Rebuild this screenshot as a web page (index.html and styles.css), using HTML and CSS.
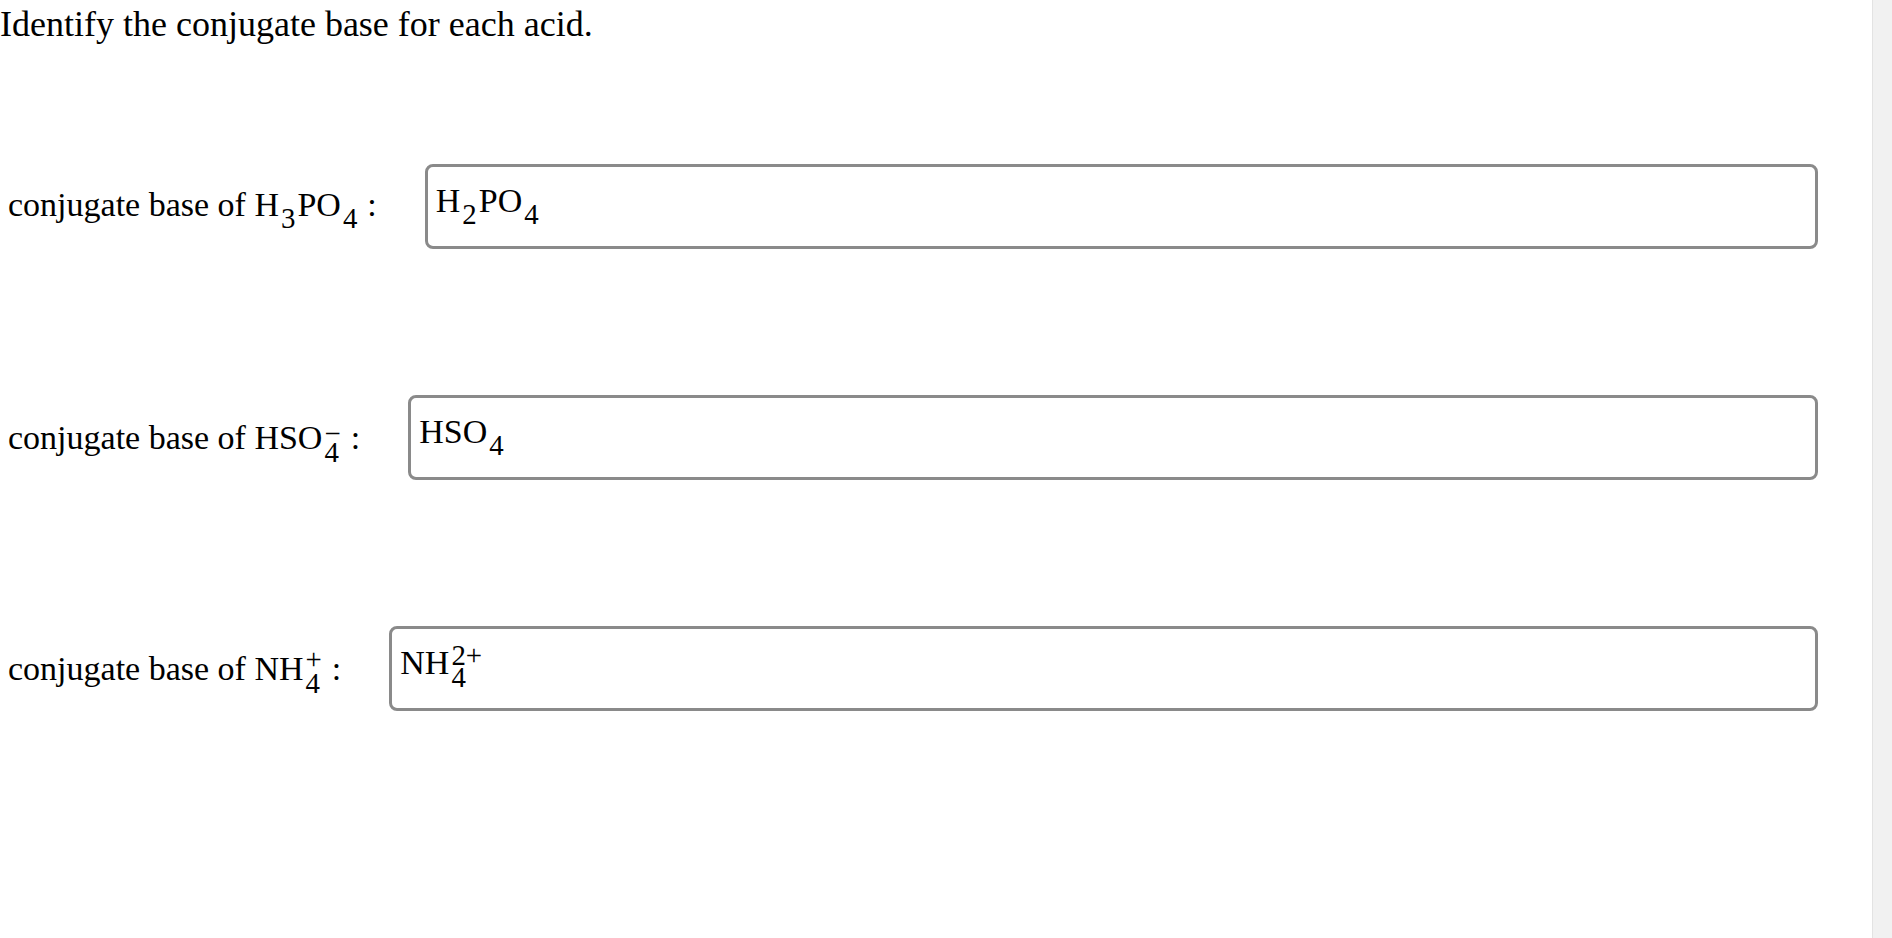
FILE: index.html
```html
<!DOCTYPE html>
<html>
<head>
<meta charset="utf-8">
<link rel="stylesheet" href="styles.css">
</head>
<body>
<div class="page">
  <main class="content">
    <div class="title">Identify the conjugate base for each acid.</div>
    <div class="rows">
      <div class="row">
        <div class="label">conjugate base of H<span class="sub">3</span>PO<span class="sub">4</span><span class="colon">:</span></div>
        <div class="box"><span class="value">H<span class="sub">2</span>PO<span class="sub">4</span></span></div>
      </div>
      <div class="row">
        <div class="label">conjugate base of HSO<span class="ss"><span class="sup minus">&minus;</span><span class="sb">4</span></span><span class="colon">:</span></div>
        <div class="box"><span class="value">HSO<span class="sub">4</span></span></div>
      </div>
      <div class="row">
        <div class="label">conjugate base of NH<span class="ss"><span class="sup">+</span><span class="sb">4</span></span><span class="colon">:</span></div>
        <div class="box"><span class="value">NH<span class="ss tight"><span class="sup">2+</span><span class="sb">4</span></span></span></div>
      </div>
    </div>
  </main>
  <div class="scrollbar"></div>
</div>
</body>
</html>
```
FILE: styles.css
```css
html, body {
  margin: 0;
  padding: 0;
  height: 100%;
}
body {
  font-family: "Liberation Serif", "Times New Roman", serif;
  font-size: 34px;
  color: #000;
  background: #fff;
}
.page {
  display: flex;
  height: 100%;
}
.content {
  flex: 1;
  padding-right: 54px;
}
.scrollbar {
  width: 19px;
  background: #f1f1f1;
  border-left: 1px solid #e3e3e3;
}
.title {
  font-size: 36px;
  line-height: 41px;
  padding-top: 4px;
}
.rows {
  display: flex;
  flex-direction: column;
  gap: 146px;
  margin-top: 119px;
}
.row {
  display: flex;
  align-items: flex-start;
  height: 85px;
}
.label {
  padding-left: 8px;
  margin-right: 48px;
  white-space: nowrap;
  line-height: 40px;
  padding-top: 21px;
}
.colon {
  margin-left: 8px;
}
.box {
  flex: 1;
  height: 85px;
  box-sizing: border-box;
  border: 3px solid #8a8a8a;
  border-radius: 8px;
  padding: 14px 8px 0;
  white-space: nowrap;
}
.value {
  line-height: 40px;
}
.sub {
  font-size: 0.85em;
  vertical-align: -0.42em;
  line-height: 0;
  margin: 0 2px;
}
.ss {
  display: inline-flex;
  flex-direction: column;
  font-size: 0.85em;
  line-height: 24px;
  vertical-align: 0.38em;
  margin: 0 2px;
}
.ss.tight {
  line-height: 22px;
  vertical-align: 0.3em;
}
.sup, .sb {
  display: block;
}
.sup.minus {
  transform: translateY(5px);
}
```
